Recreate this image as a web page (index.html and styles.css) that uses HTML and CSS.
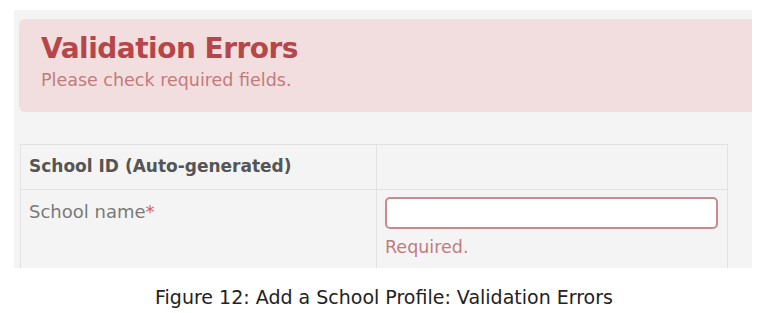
FILE: index.html
```html
<!DOCTYPE html>
<html lang="en">
<head>
  <meta charset="UTF-8">
  <title>Add a School Profile: Validation Errors</title>
  <link rel="stylesheet" href="styles.css">
</head>
<body>
<div class="shot">
  <div class="alert">
    <h2>Validation Errors</h2>
    <p>Please check required fields.</p>
  </div>
  <table class="form">
    <tr>
      <th>School ID (Auto-generated)</th>
      <td></td>
    </tr>
    <tr>
      <td class="label">School name<span class="req">*</span></td>
      <td>
        <input type="text" class="error">
        <div class="help">Required.</div>
      </td>
    </tr>
  </table>
</div>
<div class="caption">Figure 12: Add a School Profile: Validation Errors</div>
</body>
</html>
```

FILE: styles.css
```css
* {
  box-sizing: border-box;
}
body {
  margin: 0;
  padding: 10px 0 0 14px;
  background-color: #fff;
  font-family: "DejaVu Sans", Verdana, sans-serif;
}
.shot {
  width: 738px;
  height: 258px;
  overflow: hidden;
  background-color: #f4f4f4;
  padding: 9px 0 0 5px;
}
.alert {
  background-color: #f2dede;
  border-radius: 6px 0 0 6px;
  height: 93px;
  padding: 14px 0 0 22px;
  color: #b5474a;
}
.alert h2 {
  margin: 0;
  font-size: 28px;
  line-height: 32px;
  letter-spacing: -0.5px;
}
.alert p {
  margin: 4px 0 0;
  font-size: 17.5px;
  line-height: 22px;
  color: #c27b7d;
}
.form {
  margin: 32px 0 0 1px;
  border-collapse: collapse;
  width: 708px;
}
.form th, .form td {
  border: 1px solid #e2e2e2;
  text-align: left;
  vertical-align: top;
  padding: 0 8px;
}
.form th {
  height: 45px;
  width: 356px;
  padding-top: 11px;
  font-size: 17px;
  line-height: 20px;
  color: #555;
}
.form td.label {
  padding-top: 11px;
  font-size: 18px;
  line-height: 21px;
  color: #7a7a7a;
  height: 90px;
}
.req {
  color: #e0585a;
}
input.error {
  display: block;
  margin-top: 7px;
  width: 333px;
  height: 32px;
  border: 2px solid #cc8a8c;
  border-radius: 5px;
  background-color: #fff;
}
.help {
  margin-top: 8px;
  font-size: 17.5px;
  line-height: 21px;
  color: #c27b7d;
}
.caption {
  margin: 18px 0 0 -14px;
  text-align: center;
  font-size: 19px;
  line-height: 22px;
  color: #222;
}
```
